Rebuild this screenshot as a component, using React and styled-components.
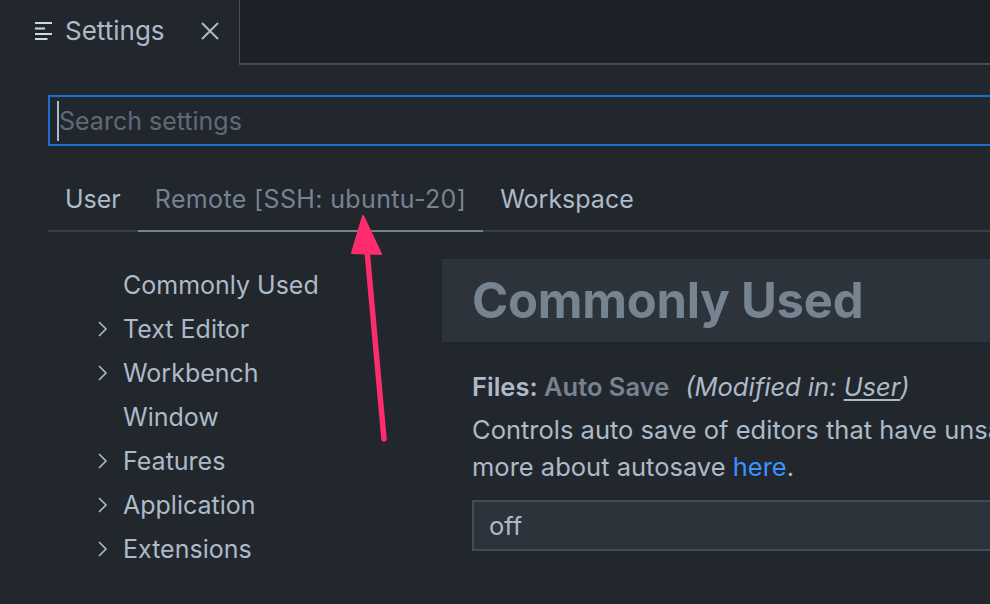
import React from "react";
import styled, { createGlobalStyle } from "styled-components";

const Global = createGlobalStyle`
  html, body { margin: 0; padding: 0; background: #22272e; overflow: hidden; }
  body { width: 990px; height: 604px; font-family: Inter, "Noto Sans", sans-serif; color: #adbac7; }
  * { box-sizing: border-box; }
`;

const Page = styled.div`
  position: relative;
  width: 990px;
  height: 604px;
  overflow: hidden;
  background: #22272e;
`;

const TabBar = styled.div`
  display: flex;
  height: 65px;
  background: #1c2128;
`;

const EditorTab = styled.div`
  width: 240px;
  display: flex;
  align-items: center;
  padding-left: 35px;
  padding-bottom: 4px;
  background: #22272e;
  border-right: 1px solid #444c56;
  font-size: 26px;
  color: #adbac7;
`;

const TabTitle = styled.span`
  margin-left: 12px;
  flex: 1;
`;

const CloseIcon = styled.svg`
  margin-right: 20px;
`;

const TabFill = styled.div`
  flex: 1;
  border-bottom: 2px solid #444c56;
`;

const Body = styled.div`
  padding: 30px 0 0 48px;
  width: 1100px;
`;

const SearchBox = styled.div`
  height: 51px;
  border: 2px solid #1b6fd0;
  display: flex;
  align-items: center;
  padding-left: 7px;
  font-size: 25px;
  color: #5f6a77;
`;

const Caret = styled.span`
  width: 2px;
  height: 40px;
  background: #adbac7;
`;

const ScopeTabs = styled.div`
  display: flex;
  margin-top: 34px;
  border-bottom: 2px solid #373e47;
  height: 52px;
`;

const ScopeTab = styled.div`
  padding: 0 17px;
  font-size: 25px;
  line-height: 1;
  padding-top: 7px;
  letter-spacing: ${(p) => (p.$active ? "0.36px" : "0")};
  color: ${(p) => (p.$active ? "#768390" : "#adbac7")};
  border-bottom: 2px solid ${(p) => (p.$active ? "#768390" : "transparent")};
  margin-bottom: -2px;
`;

const Columns = styled.div`
  display: flex;
  margin-top: 27px;
`;

const Nav = styled.div`
  width: 394px;
  flex-shrink: 0;
  display: flex;
  flex-direction: column;
  padding-top: 4px;
`;

const NavItem = styled.div`
  height: 44px;
  display: flex;
  align-items: center;
  padding-left: 49px;
  font-size: 25px;
  color: #adbac7;
`;

const ChevronSlot = styled.span`
  width: 26px;
  display: flex;
  align-items: center;
`;

const Main = styled.div`
  flex: 1;
  min-width: 0;
`;

const SectionHeader = styled.div`
  height: 83px;
  background: #2d333b;
  display: flex;
  align-items: center;
  padding-left: 30px;
  font-size: 49px;
  font-weight: 700;
  color: #768390;
  letter-spacing: -0.25px;
`;

const Setting = styled.div`
  padding: 30px 0 0 30px;
`;

const SettingTitle = styled.div`
  font-size: 25.5px;
  line-height: 30px;
  color: #768390;
  font-weight: 600;
`;

const Category = styled.span`
  color: #adbac7;
`;

const Modified = styled.span`
  font-weight: 400;
  font-style: italic;
  color: #adbac7;
  margin-left: 16px;
`;

const Underlined = styled.span`
  text-decoration: underline;
  text-underline-offset: 3px;
`;

const Description = styled.div`
  margin-top: 9px;
  font-size: 25.5px;
  line-height: 37px;
  color: #adbac7;
  white-space: nowrap;
`;

const Link = styled.span`
  color: #3794ff;
`;

const Select = styled.div`
  margin-top: 15px;
  height: 51px;
  border: 2px solid #444c56;
  background: #2d333b;
  display: flex;
  align-items: center;
  padding-left: 15px;
  font-size: 25.5px;
  color: #adbac7;
`;

const Arrow = styled.svg`
  position: absolute;
  left: 0;
  top: 0;
  pointer-events: none;
`;

const Chevron = () => (
  <svg width="12" height="18" viewBox="0 0 12 18">
    <path d="M2 2 L9 9 L2 16" fill="none" stroke="#adbac7" strokeWidth="1.6" />
  </svg>
);

const navItems = [
  { label: "Commonly Used", chevron: false },
  { label: "Text Editor", chevron: true },
  { label: "Workbench", chevron: true },
  { label: "Window", chevron: false },
  { label: "Features", chevron: true },
  { label: "Application", chevron: true },
  { label: "Extensions", chevron: true },
];

export default function App() {
  return (
    <Page>
      <Global />
      <TabBar>
        <EditorTab>
          <svg width="18" height="18" viewBox="0 0 18 18">
            <g fill="#d0d7de">
              <rect x="0" y="0" width="17" height="2" />
              <rect x="0" y="5.5" width="10" height="2" />
              <rect x="0" y="11" width="17" height="2" />
              <rect x="0" y="16" width="12.5" height="2" />
            </g>
          </svg>
          <TabTitle>Settings</TabTitle>
          <CloseIcon width="18" height="18" viewBox="0 0 18 18">
            <path d="M1 1 L17 17 M17 1 L1 17" stroke="#adbac7" strokeWidth="2" />
          </CloseIcon>
        </EditorTab>
        <TabFill />
      </TabBar>
      <Body>
        <SearchBox>
          <Caret />
          Search settings
        </SearchBox>
        <ScopeTabs>
          <ScopeTab>User</ScopeTab>
          <ScopeTab $active>Remote [SSH: ubuntu-20]</ScopeTab>
          <ScopeTab>Workspace</ScopeTab>
        </ScopeTabs>
        <Columns>
          <Nav>
            {navItems.map((n) => (
              <NavItem key={n.label}>
                <ChevronSlot>{n.chevron && <Chevron />}</ChevronSlot>
                {n.label}
              </NavItem>
            ))}
          </Nav>
          <Main>
            <SectionHeader>Commonly Used</SectionHeader>
            <Setting>
              <SettingTitle>
                <Category>Files: </Category>Auto Save
                <Modified>
                  (Modified in: <Underlined>User</Underlined>)
                </Modified>
              </SettingTitle>
              <Description>
                Controls auto save of editors that have unsaved changes.
                <br />
                more about autosave <Link>here</Link>.
              </Description>
              <Select>off</Select>
            </Setting>
          </Main>
        </Columns>
      </Body>
      <Arrow width="990" height="604" viewBox="0 0 990 604">
        <path d="M384 439 L367 250" stroke="#fe2c6c" strokeWidth="5.5" strokeLinecap="round" />
        <path d="M363 216 L381 254 L352 253 Z" fill="#fe2c6c" stroke="#fe2c6c" strokeWidth="2" strokeLinejoin="round" />
      </Arrow>
    </Page>
  );
}
